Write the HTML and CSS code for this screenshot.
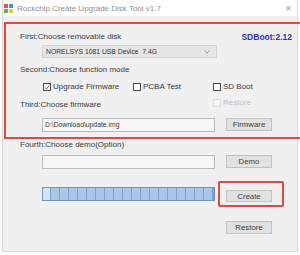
FILE: index.html
```html
<!DOCTYPE html>
<html>
<head>
<meta charset="utf-8">
<link rel="stylesheet" href="styles.css">
</head>
<body>
<div class="window">
  <div class="titlebar">
    <svg class="app-icon" width="10" height="9" viewBox="0 0 10 9">
      <rect x="0" y="0" width="4" height="4" fill="#e2574c"/>
      <rect x="5" y="0" width="4" height="4" fill="#4a90d9"/>
      <rect x="0" y="5" width="4" height="4" fill="#5bb05b"/>
      <rect x="5" y="5" width="4" height="4" fill="#f2c230"/>
    </svg>
    <span class="title">Rockchip Create Upgrade Disk Tool v1.7</span>
    <span class="close">&#x2715;</span>
  </div>
  <div class="content">
    <section class="redbox">
      <div class="row-head">
        <span class="label">First:Choose removable disk</span>
        <span class="sdboot">SDBoot:2.12</span>
      </div>
      <div class="combo">
        <span class="combo-text">NORELSYS 1081 USB Device&nbsp;&nbsp;7.4G</span>
        <svg class="combo-arrow" width="6" height="4" viewBox="0 0 6 4"><path d="M0.5 0.5 L3 3 L5.5 0.5" fill="none" stroke="#888" stroke-width="0.9"/></svg>
      </div>
      <div class="label second">Second:Choose function mode</div>
      <div class="checks">
        <label class="check c1"><span class="box checked"><svg width="7" height="7" viewBox="0 0 7 7"><path d="M1 3.6 L2.8 5.3 L6 1.4" fill="none" stroke="#444" stroke-width="1"/></svg></span>Upgrade Firmware</label>
        <label class="check c2"><span class="box"></span>PCBA Test</label>
        <label class="check c3"><span class="box"></span>SD Boot</label>
      </div>
      <div class="third-row">
        <span class="label third">Third:Choose firmware</span>
        <label class="check disabled"><span class="box"></span>Restore</label>
      </div>
      <div class="field-row">
        <div class="input">D:\Download\update.img</div>
        <button class="btn">Firmware</button>
      </div>
    </section>
    <div class="lower">
      <div class="label fourth">Fourth:Choose demo(Option)</div>
      <div class="field-row demo-row">
        <div class="input"></div>
        <button class="btn">Demo</button>
      </div>
      <div class="progress-row">
        <div class="progress">
          <span class="seg first"></span><span class="seg"></span><span class="seg"></span><span class="seg"></span><span class="seg"></span><span class="seg"></span><span class="seg"></span><span class="seg"></span><span class="seg"></span><span class="seg"></span><span class="seg"></span><span class="seg"></span><span class="seg"></span><span class="seg"></span><span class="seg"></span><span class="seg"></span><span class="seg"></span><span class="seg"></span><span class="seg"></span>
        </div>
        <div class="highlight">
          <button class="btn">Create</button>
        </div>
      </div>
      <div class="restore-row">
        <button class="btn">Restore</button>
      </div>
    </div>
  </div>
</div>
</body>
</html>
```

FILE: styles.css
```css
html, body {
  margin: 0;
  padding: 0;
  background: #ffffff;
}
body {
  width: 300px;
  height: 255px;
  overflow: hidden;
  font-family: "Liberation Sans", Arial, sans-serif;
  font-size: 8px;
  color: #3a3a3a;
}
.window {
  margin-left: 2px;
  width: 294px;
  height: 251px;
  border: 1px solid #d8d8d8;
  border-top: none;
  display: flex;
  flex-direction: column;
  background: #f0f0f0;
}
.titlebar {
  height: 16px;
  background: #ffffff;
  display: flex;
  align-items: center;
  padding-left: 1px;
  flex: none;
}
.app-icon {
  margin-right: 3px;
  margin-top: 0;
}
.title {
  color: #8f8f8f;
  font-size: 8px;
  flex: 1;
}
.close {
  color: #a0a0a0;
  font-size: 8px;
  margin-right: 5px;
}
.content {
  flex: 1;
  padding-top: 6px;
}
.redbox {
  margin-left: 1px;
  width: 282px;
  border: 2px solid #e8453c;
  padding: 8px 0 5px 14px;
}
.label {
  line-height: 10px;
  height: 10px;
  white-space: nowrap;
}
.row-head {
  display: flex;
  justify-content: space-between;
  align-items: center;
  height: 10px;
  padding-right: 10px;
}
.sdboot {
  color: #2f33d0;
  font-weight: bold;
  font-size: 8.5px;
}
.combo {
  margin: 3px 0 0 22px;
  height: 11px;
  background: #e6e6e6;
  border: 1px solid #d2d2d2;
  display: flex;
  align-items: center;
  justify-content: space-between;
  padding: 0 6px 0 3px;
  box-sizing: content-box;
  width: 164px;
}
.combo-text {
  font-size: 6.8px;
  color: #333;
}
.second {
  margin-top: 7px;
}
.checks {
  margin-top: 7px;
  height: 10px;
  display: grid;
  grid-template-columns: 90px 80px auto;
  padding-left: 23px;
}
.check {
  display: flex;
  align-items: center;
  line-height: 10px;
  white-space: nowrap;
}
.box {
  width: 6px;
  height: 6px;
  border: 1px solid #4a4a4a;
  background: #ffffff;
  margin-right: 2px;
  display: inline-flex;
  align-items: center;
  justify-content: center;
  flex: none;
}
.box svg {
  display: block;
}
.third-row {
  margin-top: 6px;
  display: grid;
  grid-template-columns: 193px auto;
  align-items: start;
}
.third {
  margin-top: 2px;
}
.check.disabled {
  color: #c0c0c0;
}
.check.disabled .box {
  border-color: #dedede;
  background: #f6f6f6;
}
.field-row {
  display: grid;
  grid-template-columns: 173px 46px;
  column-gap: 11px;
  align-items: start;
  padding-left: 22px;
  margin-top: 8px;
}
.input {
  height: 12px;
  border: 1px solid #bcbcbc;
  background: #f7f7f7;
  font-size: 6.8px;
  line-height: 12px;
  padding-left: 2px;
  color: #3a3a3a;
  white-space: nowrap;
}
.btn {
  font-family: "Liberation Sans", Arial, sans-serif;
  font-size: 7.8px;
  color: #3d3d3d;
  background: #e1e1e1;
  border: 1px solid #c2c2c2;
  height: 13px;
  width: 46px;
  padding: 0;
  margin: 0;
  line-height: 11px;
}
.lower {
  padding-left: 17px;
}
.fourth {
  margin-top: 1px;
}
.demo-row {
  margin-top: 5px;
  padding-left: 22px;
}
.progress-row {
  margin-top: 12px;
  padding-left: 22px;
  display: flex;
  align-items: center;
}
.progress {
  width: 171px;
  height: 12px;
  border: 1px solid #7393bd;
  background: #7f9fc8;
  display: flex;
  gap: 1px;
}
.seg {
  width: 8px;
  height: 12px;
  background: #a9c6e9;
  flex: none;
}
.seg.first {
  width: 7px;
  background: #d1e4fa;
}
.highlight {
  margin-left: 3px;
  border: 2px solid #e8453c;
  border-radius: 2px;
  padding: 7px 10px 3px 6px;
}
.highlight .btn {
  display: block;
  height: 12px;
}
.restore-row {
  margin-top: 14px;
  padding-left: 206px;
}
```
